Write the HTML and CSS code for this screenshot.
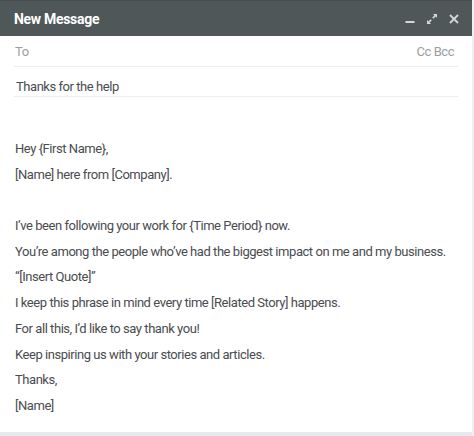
FILE: index.html
```html
<!DOCTYPE html>
<html lang="en">
<head>
<meta charset="utf-8">
<title>New Message</title>
<link rel="stylesheet" href="styles.css">
</head>
<body>
<div class="compose">
  <header class="titlebar">
    <span class="title">New Message</span>
    <div class="controls">
      <svg class="ctl" width="14" height="14" viewBox="0 0 14 14"><rect x="2.5" y="9" width="9" height="2" fill="#d4d7d8"/></svg>
      <svg class="ctl" width="14" height="14" viewBox="0 0 14 14"><path d="M8 2h4v4l-1.4-1.4-2.2 2.2-1.2-1.2 2.2-2.2zM6 12H2V8l1.4 1.4 2.2-2.2 1.2 1.2-2.2 2.2z" fill="#d4d7d8"/></svg>
      <svg class="ctl" width="14" height="14" viewBox="0 0 14 14"><path d="M3 3l8 8M11 3l-8 8" stroke="#d4d7d8" stroke-width="1.8"/></svg>
    </div>
  </header>
  <div class="fields">
    <div class="field to-row">
      <span class="label">To</span>
      <span class="cc">Cc Bcc</span>
    </div>
    <div class="field subject">Thanks for the help</div>
  </div>
  <div class="body">
    <p>Hey {First Name},</p>
    <p>[Name] here from [Company].</p>
    <p class="gap">I’ve been following your work for {Time Period} now.</p>
    <p>You’re among the people who’ve had the biggest impact on me and my business.</p>
    <p>“[Insert Quote]”</p>
    <p>I keep this phrase in mind every time [Related Story] happens.</p>
    <p>For all this, I’d like to say thank you!</p>
    <p>Keep inspiring us with your stories and articles.</p>
    <p>Thanks,</p>
    <p>[Name]</p>
  </div>
  <div class="footer"></div>
</div>
</body>
</html>
```
FILE: styles.css
```css
html, body {
  margin: 0;
  padding: 0;
  background: #ffffff;
}

.compose {
  width: 474px;
  height: 436px;
  display: flex;
  flex-direction: column;
  font-family: Roboto, "Liberation Sans", sans-serif;
  letter-spacing: -0.45px;
  color: #4a4c50;
  border-right: 2px solid #eef0f2;
  box-sizing: border-box;
}

.titlebar {
  height: 36px;
  background: #505759;
  border-top: 1px solid #474c4e;
  box-sizing: border-box;
  display: flex;
  align-items: center;
  justify-content: space-between;
  padding: 0 11px 0 14px;
}

.title {
  color: #ffffff;
  font-weight: 700;
  font-size: 14px;
  letter-spacing: -0.3px;
}

.controls {
  display: flex;
  gap: 8px;
  align-items: center;
}

.fields {
  padding: 0 14px 0 14px;
}

.field {
  border-bottom: 1px solid #eceef0;
  display: flex;
  align-items: center;
  font-size: 13px;
  box-sizing: border-box;
}

.to-row {
  height: 31px;
  justify-content: space-between;
  color: #9a9ea3;
  padding: 1px 0 0 1px;
}

.cc {
  padding-right: 4px;
}

.subject {
  height: 30px;
  padding: 9px 0 0 2px;
  color: #4a4c50;
}

.body {
  flex: 1;
  padding: 39px 14px 0 15px;
  font-size: 13px;
  white-space: nowrap;
}

.body p {
  margin: 0;
  height: 25.7px;
  line-height: 25.7px;
}

.body p.gap {
  margin-top: 25.7px;
}

.footer {
  height: 4px;
  background: #e8e9ec;
}
```
